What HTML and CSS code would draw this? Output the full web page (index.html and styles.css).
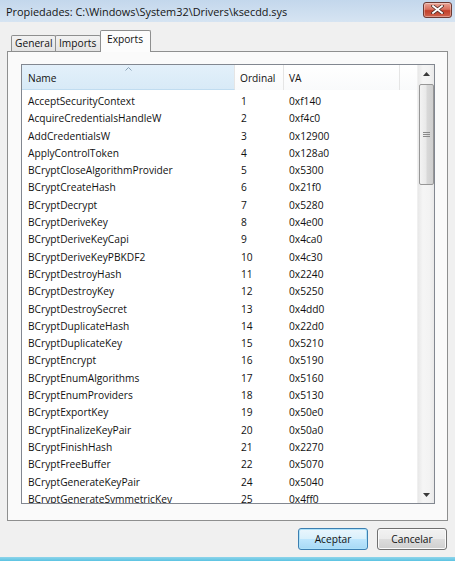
FILE: index.html
```html
<!DOCTYPE html>
<html>
<head>
<meta charset="utf-8">
<link rel="stylesheet" href="styles.css">
</head>
<body>
<div class="window">
  <div class="titlebar">
    <span class="title">Propiedades: C:\Windows\System32\Drivers\ksecdd.sys</span>
    <div class="close"><svg width="13" height="9" viewBox="0 0 13 9"><path d="M2 1 L11 8 M11 1 L2 8" stroke="#4a2a25" stroke-width="3.4" stroke-linecap="square"/><path d="M2 1 L11 8 M11 1 L2 8" stroke="#fff" stroke-width="1.8" stroke-linecap="square"/></svg></div>
  </div>
  <div class="body">
    <div class="tabs">
      <div class="tab">General</div>
      <div class="tab">Imports</div>
      <div class="tab active">Exports</div>
    </div>
    <div class="panel">
      <div class="list">
        <div class="listmain">
          <div class="header">
            <div class="hcell c-name sorted"><svg class="sortarrow" width="7" height="4" viewBox="0 0 7 4"><path d="M0.5 3.5 L3.5 0.5 L6.5 3.5" fill="none" stroke="#8aa3b8" stroke-width="1"/></svg>Name</div>
            <div class="hcell c-ord">Ordinal</div>
            <div class="hcell c-va">VA</div>
            <div class="hcell c-fill"></div>
          </div>
          <div class="rows" id="rows">
            <div class="row"><span class="c-name">AcceptSecurityContext</span><span class="c-ord">1</span><span class="c-va">0xf140</span></div>
            <div class="row"><span class="c-name">AcquireCredentialsHandleW</span><span class="c-ord">2</span><span class="c-va">0xf4c0</span></div>
            <div class="row"><span class="c-name">AddCredentialsW</span><span class="c-ord">3</span><span class="c-va">0x12900</span></div>
            <div class="row"><span class="c-name">ApplyControlToken</span><span class="c-ord">4</span><span class="c-va">0x128a0</span></div>
            <div class="row"><span class="c-name">BCryptCloseAlgorithmProvider</span><span class="c-ord">5</span><span class="c-va">0x5300</span></div>
            <div class="row"><span class="c-name">BCryptCreateHash</span><span class="c-ord">6</span><span class="c-va">0x21f0</span></div>
            <div class="row"><span class="c-name">BCryptDecrypt</span><span class="c-ord">7</span><span class="c-va">0x5280</span></div>
            <div class="row"><span class="c-name">BCryptDeriveKey</span><span class="c-ord">8</span><span class="c-va">0x4e00</span></div>
            <div class="row"><span class="c-name">BCryptDeriveKeyCapi</span><span class="c-ord">9</span><span class="c-va">0x4ca0</span></div>
            <div class="row"><span class="c-name">BCryptDeriveKeyPBKDF2</span><span class="c-ord">10</span><span class="c-va">0x4c30</span></div>
            <div class="row"><span class="c-name">BCryptDestroyHash</span><span class="c-ord">11</span><span class="c-va">0x2240</span></div>
            <div class="row"><span class="c-name">BCryptDestroyKey</span><span class="c-ord">12</span><span class="c-va">0x5250</span></div>
            <div class="row"><span class="c-name">BCryptDestroySecret</span><span class="c-ord">13</span><span class="c-va">0x4dd0</span></div>
            <div class="row"><span class="c-name">BCryptDuplicateHash</span><span class="c-ord">14</span><span class="c-va">0x22d0</span></div>
            <div class="row"><span class="c-name">BCryptDuplicateKey</span><span class="c-ord">15</span><span class="c-va">0x5210</span></div>
            <div class="row"><span class="c-name">BCryptEncrypt</span><span class="c-ord">16</span><span class="c-va">0x5190</span></div>
            <div class="row"><span class="c-name">BCryptEnumAlgorithms</span><span class="c-ord">17</span><span class="c-va">0x5160</span></div>
            <div class="row"><span class="c-name">BCryptEnumProviders</span><span class="c-ord">18</span><span class="c-va">0x5130</span></div>
            <div class="row"><span class="c-name">BCryptExportKey</span><span class="c-ord">19</span><span class="c-va">0x50e0</span></div>
            <div class="row"><span class="c-name">BCryptFinalizeKeyPair</span><span class="c-ord">20</span><span class="c-va">0x50a0</span></div>
            <div class="row"><span class="c-name">BCryptFinishHash</span><span class="c-ord">21</span><span class="c-va">0x2270</span></div>
            <div class="row"><span class="c-name">BCryptFreeBuffer</span><span class="c-ord">22</span><span class="c-va">0x5070</span></div>
            <div class="row"><span class="c-name">BCryptGenerateKeyPair</span><span class="c-ord">24</span><span class="c-va">0x5040</span></div>
            <div class="row"><span class="c-name">BCryptGenerateSymmetricKey</span><span class="c-ord">25</span><span class="c-va">0x4ff0</span></div>
          </div>
        </div>
        <div class="scrollbar">
          <div class="sbtn"><svg width="7" height="4" viewBox="0 0 7 4"><path d="M0 4 L3.5 0 L7 4 Z" fill="#3a3a3a"/></svg></div>
          <div class="track">
            <div class="thumb"><svg width="7" height="6" viewBox="0 0 7 6"><path d="M0 0.5 H7 M0 2.5 H7 M0 4.5 H7" stroke="#8a8a8a" stroke-width="1"/></svg></div>
          </div>
          <div class="sbtn"><svg width="7" height="4" viewBox="0 0 7 4"><path d="M0 0 L3.5 4 L7 0 Z" fill="#3a3a3a"/></svg></div>
        </div>
      </div>
    </div>
    <div class="buttons">
      <button class="btn default">Aceptar</button>
      <button class="btn">Cancelar</button>
    </div>
  </div>
  <div class="bottomline"></div>
</div>
</body>
</html>
```
FILE: styles.css
```css
* { box-sizing: border-box; }
html, body { margin: 0; padding: 0; }
body {
  width: 455px;
  height: 561px;
  overflow: hidden;
  background: #f0f0f0;
  font-family: "Open Sans", "Noto Sans", sans-serif;
  color: #111;
}
.window {
  width: 455px;
  height: 561px;
  display: flex;
  flex-direction: column;
}
.titlebar {
  height: 22px;
  flex: none;
  display: flex;
  align-items: center;
  justify-content: space-between;
  padding: 0 3px 0 6px;
  background: linear-gradient(#c3d7ec, #d6e4f2);
}
.title {
  font-size: 10.9px;
  color: #151515;
}
.close {
  width: 29px;
  height: 16px;
  margin-top: -3px;
  border: 1px solid #6e3a33;
  border-radius: 3px;
  background: linear-gradient(#eaa597 0%, #d9705d 45%, #c2402a 55%, #d0634d 100%);
  display: flex;
  align-items: center;
  justify-content: center;
  box-shadow: inset 0 0 0 1px rgba(255,255,255,0.35);
}
.body {
  flex: 1;
  display: flex;
  flex-direction: column;
  padding: 8px 0 0 0;
}
.tabs {
  display: flex;
  align-items: flex-end;
  height: 21px;
  padding-left: 11px;
  position: relative;
  z-index: 1;
}
.tab {
  height: 16px;
  padding: 0 3px;
  font-size: 10.2px;
  line-height: 15px;
  border: 1px solid #8e8f8f;
  border-bottom: none;
  background: linear-gradient(#f2f2f2, #e3e3e3);
  margin-right: -1px;
  border-radius: 2px 2px 0 0;
}
.tab:first-child { width: 45px; }
.tab:nth-child(2) { width: 46px; }
.tab.active {
  height: 22px;
  width: 51px;
  margin-bottom: -1px;
  background: #fcfcfc;
  line-height: 17px;
  padding-left: 6px;
}
.panel {
  margin: 0 7px 0 7px;
  height: 470px;
  border: 1px solid #8e8f8f;
  background: #fafafa;
  padding: 12px 0 0 13px;
}
.list {
  width: 414px;
  height: 440px;
  border: 1px solid #828790;
  background: #fff;
  display: flex;
  overflow: hidden;
}
.listmain {
  flex: 1;
  overflow: hidden;
  display: flex;
  flex-direction: column;
}
.header {
  height: 25px;
  flex: none;
  display: flex;
  font-size: 10.2px;
}
.hcell {
  height: 25px;
  padding-top: 6px;
  border-right: 1px solid #e5e5e5;
  position: relative;
  background: linear-gradient(#ffffff, #f9fafb);
}
.hcell.sorted {
  background: linear-gradient(#e3f0fa, #d8eaf7);
  border-bottom: 1px solid #c0dcf0;
}
.sortarrow {
  position: absolute;
  left: 103px;
  top: 2px;
}
.header .c-name { width: 213px; padding-left: 6px; }
.header .c-ord { width: 49px; padding-left: 5px; }
.header .c-va { width: 116px; padding-left: 5px; }
.header .c-fill { flex: 1; border-right: none; }
.rows {
  padding-top: 3px;
  font-size: 10.2px;
}
.row {
  height: 17.3px;
  line-height: 17.3px;
  display: flex;
  white-space: nowrap;
}
.row .c-name { width: 213px; padding-left: 6px; }
.row .c-ord { width: 49px; padding-left: 6px; }
.row .c-va { width: 116px; padding-left: 5px; }
.scrollbar {
  width: 17px;
  flex: none;
  display: flex;
  flex-direction: column;
  background: linear-gradient(90deg, #e8e8e8, #f5f5f5 30%, #f3f3f3 70%, #e9e9e9);
  border-left: 1px solid #f0f0f0;
}
.sbtn {
  height: 17px;
  flex: none;
  display: flex;
  align-items: center;
  justify-content: center;
}
.track {
  flex: 1;
  padding: 2px 0 0 1px;
}
.thumb {
  width: 15px;
  height: 101px;
  border: 1px solid #979797;
  border-radius: 2px;
  background: linear-gradient(90deg, #f3f3f3, #e9e9e9 45%, #d8d8d8 55%, #cfcfcf);
  display: flex;
  align-items: center;
  justify-content: center;
}
.buttons {
  display: flex;
  justify-content: flex-end;
  gap: 9px;
  padding: 7px 8px 0 0;
}
.btn {
  width: 70px;
  height: 22px;
  font-family: "Open Sans", "Noto Sans", sans-serif;
  font-size: 10.2px;
  color: #111;
  border: 1px solid #707070;
  border-radius: 3px;
  background: linear-gradient(#f2f2f2 0%, #ebebeb 49%, #dddddd 50%, #cfcfcf 100%);
  box-shadow: inset 0 0 0 1px #fbfbfb;
  padding: 0;
}
.btn.default {
  border-color: #3c7fb1;
  background: linear-gradient(#eaf6fd 0%, #d9f0fc 49%, #bee6fd 50%, #a7d9f5 100%);
  box-shadow: inset 0 0 0 1px #aee2fa;
}
.bottomline {
  height: 4px;
  flex: none;
  margin-top: auto;
  background: linear-gradient(#8fd4ea, #5bc3e2);
}
```
